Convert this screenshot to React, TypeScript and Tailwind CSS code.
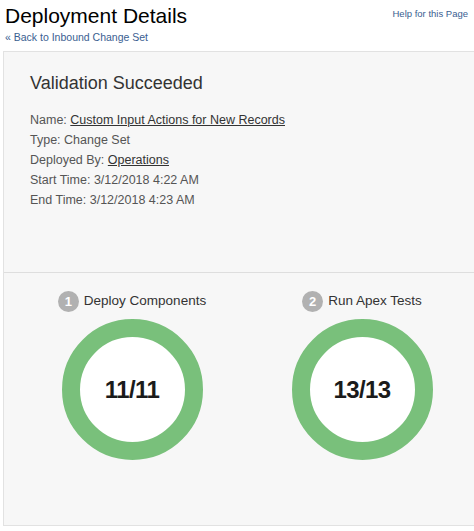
import React from "react";

function Step({ n, label, value }: { n: number; label: string; value: string }) {
  return (
    <div className="w-[230px] flex flex-col items-center">
      <div className="flex items-center gap-[5px] h-[20px]">
        <span className="w-[21px] h-[21px] rounded-full bg-[#b1b1b1] text-white text-[13px] font-bold flex items-center justify-center leading-none">
          {n}
        </span>
        <span className="text-[13.5px] text-[#333] leading-[20px]">{label}</span>
      </div>
      <div className="mt-[8px] w-[141px] h-[141px] rounded-full border-[18px] border-[#79c07b] bg-white flex items-center justify-center">
        <span className="text-[24px] font-bold text-[#1b1b1b] tracking-[-0.6px] leading-none">{value}</span>
      </div>
    </div>
  );
}

export default function App() {
  return (
    <div
      className="w-[474px] h-[531px] bg-white overflow-hidden"
      style={{ fontFamily: '"Liberation Sans", Arial, sans-serif' }}
    >
      <div className="flex justify-between items-start pl-[5px] pr-[6px]">
        <div className="pt-[4px]">
          <div className="text-[21px] leading-[24px] text-black">Deployment Details</div>
          <div className="mt-[3px] text-[10.5px] leading-[12px] text-[#3a5e91]">« Back to Inbound Change Set</div>
        </div>
        <div className="pt-[8px] text-[9.5px] leading-[11px] text-[#3a5e91]">Help for this Page</div>
      </div>
      <div className="mt-[8px] ml-[3px] mr-[-4px] h-[475px] border border-[#e2e2e2] bg-[#f7f7f7] flex flex-col">
        <div className="h-[221px] pl-[26px] pt-[20px] border-b border-[#dedede]">
          <div className="text-[18px] leading-[22px] text-[#333]">Validation Succeeded</div>
          <div className="mt-[16px] text-[12.5px] leading-[20px] text-[#555]">
            <div>
              Name: <span className="underline text-[#333]">Custom Input Actions for New Records</span>
            </div>
            <div>Type: Change Set</div>
            <div>
              Deployed By: <span className="underline text-[#333]">Operations</span>
            </div>
            <div>Start Time: 3/12/2018 4:22 AM</div>
            <div>End Time: 3/12/2018 4:23 AM</div>
          </div>
        </div>
        <div className="flex pl-[13px] pt-[18px]">
          <Step n={1} label="Deploy Components" value="11/11" />
          <Step n={2} label="Run Apex Tests" value="13/13" />
        </div>
      </div>
    </div>
  );
}
